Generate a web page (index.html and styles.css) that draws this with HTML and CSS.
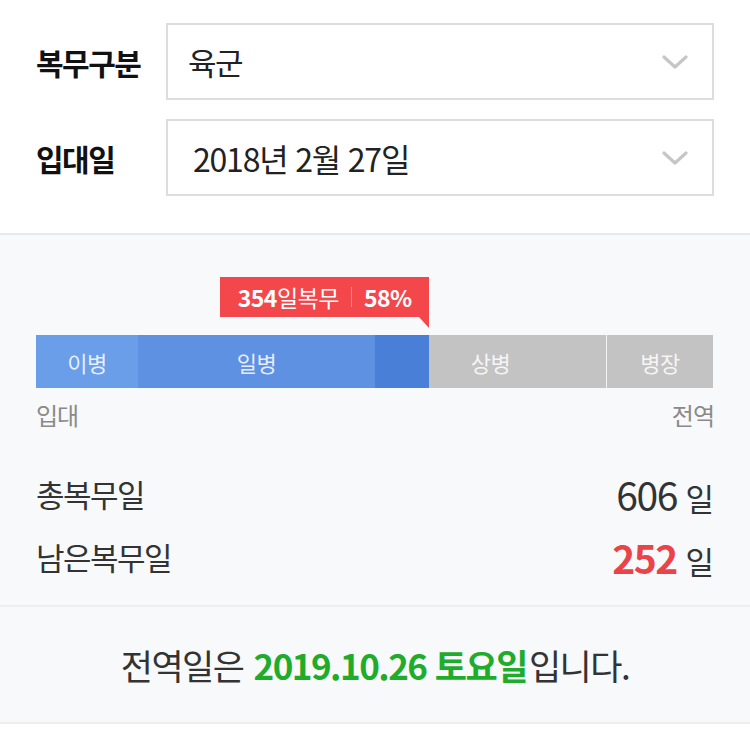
FILE: index.html
```html
<!DOCTYPE html>
<html lang="ko">
<head>
    <meta charset="UTF-8">
    <meta name="viewport" content="width=device-width, initial-scale=1.0">
    <title>전역일 계산기</title>
    <link rel="stylesheet" href="styles.css">
</head>
<body>
    <div class="form">
        <div class="form-row">
            <label class="form-label">복무구분</label>
            <div class="select">
                <span class="select-value">육군</span>
                <svg class="chevron" width="26" height="14" viewBox="0 0 26 14"><path d="M2 2 L13 12 L24 2" fill="none" stroke="#c6c6c6" stroke-width="3.2" stroke-linecap="round" stroke-linejoin="round"/></svg>
            </div>
        </div>
        <div class="form-row">
            <label class="form-label">입대일</label>
            <div class="select">
                <span class="select-value date">2018년 2월 27일</span>
                <svg class="chevron" width="26" height="14" viewBox="0 0 26 14"><path d="M2 2 L13 12 L24 2" fill="none" stroke="#c6c6c6" stroke-width="3.2" stroke-linecap="round" stroke-linejoin="round"/></svg>
            </div>
        </div>
    </div>

    <div class="summary">
        <div class="progress">
            <div class="tooltip-wrap" style="width: 58%;">
                <div class="tooltip">
                    <span><b>354</b>일복무</span>
                    <span class="tooltip-sep"></span>
                    <b>58%</b>
                </div>
            </div>
            <div class="bar">
                <div class="seg seg-1" style="width: 102px;">이병</div>
                <div class="seg seg-2" style="width: 237px;">일병</div>
                <div class="seg seg-3" style="width: 231px; --done: 54px;">상병</div>
                <div class="seg seg-4" style="width: 106px;">병장</div>
            </div>
            <div class="bar-ends">
                <span>입대</span>
                <span>전역</span>
            </div>
        </div>

        <div class="stats">
            <div class="stat">
                <span class="stat-name">총복무일</span>
                <span class="stat-value"><span class="num">606</span> 일</span>
            </div>
            <div class="stat">
                <span class="stat-name">남은복무일</span>
                <span class="stat-value"><span class="num remain">252</span> 일</span>
            </div>
        </div>
    </div>

    <div class="result">
        전역일은 <span class="result-date">2019.10.26 토요일</span>입니다.
    </div>
</body>
</html>
```

FILE: styles.css
```css
body {
    font-family: "Noto Sans CJK KR", "Noto Sans", sans-serif;
    margin: 0;
    background: #fff;
    color: #222;
}
.form {
    padding: 23px 36px 37px;
    display: flex;
    flex-direction: column;
    gap: 19px;
    border-bottom: 2px solid #e9eaec;
}
.form-row {
    display: flex;
    align-items: center;
}
.form-label {
    width: 130px;
    font-size: 30px;
    font-weight: bold;
    color: #111;
    letter-spacing: -1.5px;
}
.select {
    flex: 1;
    height: 77px;
    box-sizing: border-box;
    border: 2px solid #dddddd;
    display: flex;
    align-items: center;
    justify-content: space-between;
    padding: 0 24px 0 20px;
}
.select-value {
    font-size: 31px;
    color: #222;
    letter-spacing: -1.5px;
}
.select-value.date {
    padding-left: 5px;
    font-size: 32px;
    letter-spacing: -1.2px;
}
.summary {
    background: #f7f9fb;
    padding: 42px 36px 17px;
    border-bottom: 2px solid #eceef0;
}
.tooltip-wrap {
    display: flex;
    justify-content: flex-end;
}
.tooltip {
    position: relative;
    background: #f3474b;
    color: #fff;
    height: 40px;
    width: 209px;
    box-sizing: border-box;
    display: flex;
    align-items: center;
    justify-content: center;
    gap: 12px;
    font-size: 23px;
    letter-spacing: -0.5px;
}
.tooltip b {
    font-weight: bold;
}
.tooltip-sep {
    width: 1px;
    height: 20px;
    background: rgba(255, 255, 255, 0.35);
}
.tooltip::after {
    content: "";
    position: absolute;
    right: 0;
    bottom: -11px;
    border-top: 11px solid #f3474b;
    border-left: 10px solid transparent;
}
.bar {
    display: flex;
    height: 53px;
    margin-top: 18px;
}
.seg {
    display: flex;
    align-items: center;
    justify-content: center;
    font-size: 22px;
    color: rgba(255, 255, 255, 0.85);
    letter-spacing: -0.5px;
}
.seg-1 { background: #6b9ee9; }
.seg-2 { background: #5f91e3; }
.seg-3 {
    background: linear-gradient(to right, #4a7fd8 var(--done), #c3c3c3 var(--done));
    border-right: 1px solid #f2f2f2;
}
.seg-4 { background: #c3c3c3; }
.bar-ends {
    display: flex;
    justify-content: space-between;
    margin-top: 9px;
    font-size: 24px;
    color: #8a8a8a;
    letter-spacing: -1px;
}
.stats {
    margin-top: 30px;
}
.stat {
    display: flex;
    justify-content: space-between;
    align-items: center;
    height: 63px;
}
.stat-name {
    font-size: 31px;
    color: #333;
    letter-spacing: -1.5px;
}
.stat-value {
    font-size: 31px;
    color: #333;
}
.stat-value .num {
    font-size: 39px;
    letter-spacing: -1.5px;
}
.stat-value .remain {
    color: #ea4348;
    font-weight: bold;
}
.result {
    background: #f7f9fb;
    height: 115px;
    display: flex;
    align-items: center;
    justify-content: center;
    font-size: 35px;
    color: #333;
    letter-spacing: -1.5px;
    border-bottom: 2px solid #eceef0;
}
.result-date {
    color: #1fac2b;
    font-weight: bold;
    margin: 0 2px 0 10px;
}
```
